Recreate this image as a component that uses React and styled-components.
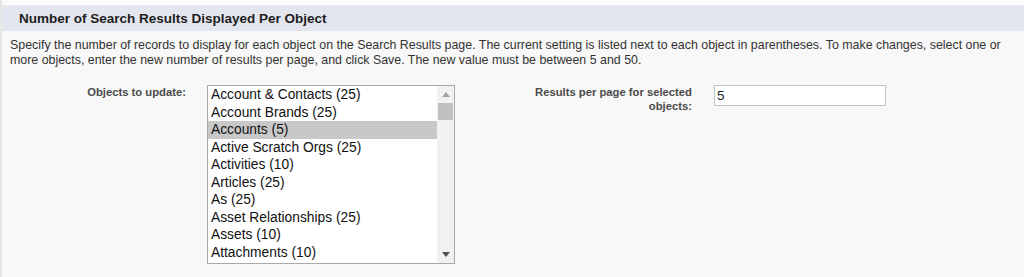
import React from 'react';
import styled, { createGlobalStyle } from 'styled-components';

const GlobalStyle = createGlobalStyle`
  html, body {
    margin: 0;
    padding: 0;
    background: #f8f8f8;
  }
  body {
    font-family: 'Liberation Sans', Arial, sans-serif;
  }
`;

const Page = styled.div`
  width: 1024px;
  height: 277px;
  overflow: hidden;
  background: #f8f8f8;
  border-left: 2px solid #e6e6e6;
  box-sizing: border-box;
`;

const TopStrip = styled.div`
  height: 5px;
  background: #fbfbfb;
  border-bottom: 1px solid #ededed;
`;

const SectionHead = styled.div`
  height: 25px;
  display: flex;
  align-items: center;
  padding-left: 17px;
  background: #e4e6ef;
  font-size: 13.5px;
  font-weight: bold;
  color: #1e1e1e;
`;

const Description = styled.p`
  margin: 0;
  padding: 7px 0 0 8px;
  font-size: 12.4px;
  line-height: 14.5px;
  color: #333;
`;

const FormRow = styled.div`
  display: flex;
  align-items: flex-start;
  margin-top: 18px;
`;

const Label = styled.label`
  width: ${({ w }) => w}px;
  flex-shrink: 0;
  text-align: right;
  font-size: 11.25px;
  font-weight: bold;
  line-height: 13.5px;
  color: #4a4a4a;
  padding-top: 1px;
`;

const ListBox = styled.div`
  margin-left: 21px;
  width: 248px;
  height: 179px;
  display: flex;
  background: #fff;
  border: 1px solid #a9a9a9;
  box-sizing: border-box;
`;

const Options = styled.div`
  flex: 1;
  overflow: hidden;
`;

const Option = styled.div`
  height: 17.5px;
  line-height: 17.5px;
  padding-left: 3px;
  font-size: 13.8px;
  color: #111;
  white-space: nowrap;
  background: ${({ selected }) => (selected ? '#c8c8c8' : 'transparent')};
`;

const Scrollbar = styled.div`
  width: 17px;
  display: flex;
  flex-direction: column;
  background: #f1f1f1;
`;

const ArrowButton = styled.div`
  height: 17px;
  display: flex;
  align-items: center;
  justify-content: center;
`;

const Track = styled.div`
  flex: 1;
  padding: 0 1px;
`;

const Thumb = styled.div`
  height: 17px;
  background: #c1c1c1;
`;

const Arrow = ({ up, color }) => (
  <svg width="8" height="5" viewBox="0 0 8 5">
    <polygon points={up ? '0,5 8,5 4,0' : '0,0 8,0 4,5'} fill={color} />
  </svg>
);

const NumberInput = styled.input`
  margin-left: 22px;
  width: 172px;
  height: 21px;
  box-sizing: border-box;
  border: 1px solid #c4c4c4;
  background: #fff;
  padding: 0 2px;
  font-family: 'Liberation Sans', Arial, sans-serif;
  font-size: 13.5px;
  color: #222;
  outline: none;
`;

const objects = [
  'Account & Contacts (25)',
  'Account Brands (25)',
  'Accounts (5)',
  'Active Scratch Orgs (25)',
  'Activities (10)',
  'Articles (25)',
  'As (25)',
  'Asset Relationships (25)',
  'Assets (10)',
  'Attachments (10)',
];

export default function App() {
  return (
    <Page>
      <GlobalStyle />
      <TopStrip />
      <SectionHead>Number of Search Results Displayed Per Object</SectionHead>
      <Description>
        Specify the number of records to display for each object on the Search Results page. The current setting is listed next to each object in parentheses. To make changes, select one or
        <br />
        more objects, enter the new number of results per page, and click Save. The new value must be between 5 and 50.
      </Description>
      <FormRow>
        <Label w={184}>Objects to update:</Label>
        <ListBox>
          <Options>
            {objects.map((o) => (
              <Option key={o} selected={o === 'Accounts (5)'}>
                {o}
              </Option>
            ))}
          </Options>
          <Scrollbar>
            <ArrowButton>
              <Arrow up color="#a3a3a3" />
            </ArrowButton>
            <Track>
              <Thumb />
            </Track>
            <ArrowButton>
              <Arrow color="#505050" />
            </ArrowButton>
          </Scrollbar>
        </ListBox>
        <Label w={237}>
          Results per page for selected
          <br />
          objects:
        </Label>
        <NumberInput defaultValue="5" />
      </FormRow>
    </Page>
  );
}
